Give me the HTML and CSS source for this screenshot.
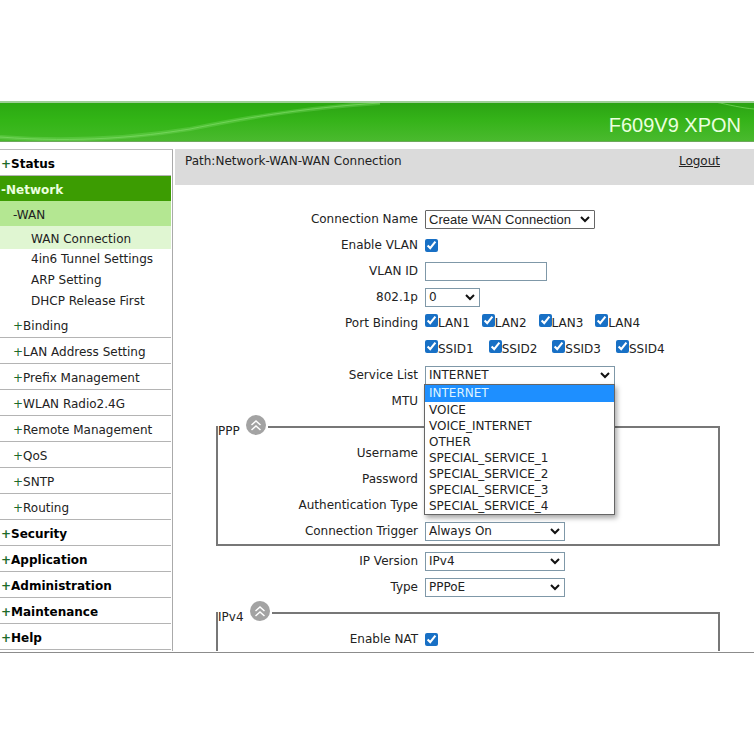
FILE: index.html
```
<!DOCTYPE html>
<html lang="en">
<head>
  <meta charset="UTF-8" />
  <meta name="viewport" content="width=device-width, initial-scale=1.0"/>
  <title>F609V9 XPON</title>
  <link rel="stylesheet" href="styles.css">
</head>
<body>
  <header class="banner">
    <svg class="swoosh" viewBox="0 0 754 38" preserveAspectRatio="none" aria-hidden="true">
      <path class="swoosh-shade" d="M0 0 L380 0 C300 5 240 16 190 26 C140 34 80 40 0 34 Z"/>
      <path class="swoosh-glow" d="M0 34 C80 40 140 34 190 26 C240 16 300 5 380 0"/>
      <path class="swoosh-line" d="M0 34 C80 40 140 34 190 26 C240 16 300 5 380 0"/>
      <path class="swoosh-line" d="M715 -1 C730 2 742 5 754 6"/>
    </svg>
    <h1>F609V9 XPON</h1>
  </header>

  <div class="frame">
    <nav class="sidebar">
      <ul class="menu">
        <li><a href="#"><span class="sign">+</span>Status</a></li>
        <li>
          <a href="#" class="current">-Network</a>
          <ul class="submenu">
            <li>
              <a href="#" class="current">-WAN</a>
              <ul class="pages">
                <li><a href="#" class="current">WAN Connection</a></li>
                <li><a href="#">4in6 Tunnel Settings</a></li>
                <li><a href="#">ARP Setting</a></li>
                <li><a href="#">DHCP Release First</a></li>
              </ul>
            </li>
            <li><a href="#"><span class="sign">+</span>Binding</a></li>
            <li><a href="#"><span class="sign">+</span>LAN Address Setting</a></li>
            <li><a href="#"><span class="sign">+</span>Prefix Management</a></li>
            <li><a href="#"><span class="sign">+</span>WLAN Radio2.4G</a></li>
            <li><a href="#"><span class="sign">+</span>Remote Management</a></li>
            <li><a href="#"><span class="sign">+</span>QoS</a></li>
            <li><a href="#"><span class="sign">+</span>SNTP</a></li>
            <li><a href="#"><span class="sign">+</span>Routing</a></li>
          </ul>
        </li>
        <li><a href="#"><span class="sign">+</span>Security</a></li>
        <li><a href="#"><span class="sign">+</span>Application</a></li>
        <li><a href="#"><span class="sign">+</span>Administration</a></li>
        <li><a href="#"><span class="sign">+</span>Maintenance</a></li>
        <li><a href="#"><span class="sign">+</span>Help</a></li>
      </ul>
    </nav>

    <main>
      <div class="path-bar">
        <span>Path:Network-WAN-WAN Connection</span>
        <a href="#">Logout</a>
      </div>

      <form class="wan-form">
        <div class="row">
          <label for="connName">Connection Name</label>
          <select id="connName" class="conn-name"><option>Create WAN Connection</option></select>
        </div>
        <div class="row">
          <label for="enableVlan">Enable VLAN</label>
          <input type="checkbox" id="enableVlan" checked>
        </div>
        <div class="row">
          <label for="vlanId">VLAN ID</label>
          <input type="text" id="vlanId">
        </div>
        <div class="row">
          <label for="priority">802.1p</label>
          <select id="priority" class="short"><option>0</option></select>
        </div>
        <div class="row">
          <span class="label">Port Binding</span>
          <div class="ports">
            <label><input type="checkbox" checked>LAN1</label>
            <label><input type="checkbox" checked>LAN2</label>
            <label><input type="checkbox" checked>LAN3</label>
            <label><input type="checkbox" checked>LAN4</label>
          </div>
        </div>
        <div class="row">
          <span class="label"></span>
          <div class="ports wifi">
            <label><input type="checkbox" checked>SSID1</label>
            <label><input type="checkbox" checked>SSID2</label>
            <label><input type="checkbox" checked>SSID3</label>
            <label><input type="checkbox" checked>SSID4</label>
          </div>
        </div>
        <div class="row">
          <label for="serviceList">Service List</label>
          <div class="dropdown">
            <select id="serviceList" class="long"><option>INTERNET</option></select>
            <ul class="options" role="listbox" aria-label="Service List">
              <li role="option" aria-selected="true">INTERNET</li>
              <li role="option">VOICE</li>
              <li role="option">VOICE_INTERNET</li>
              <li role="option">OTHER</li>
              <li role="option">SPECIAL_SERVICE_1</li>
              <li role="option">SPECIAL_SERVICE_2</li>
              <li role="option">SPECIAL_SERVICE_3</li>
              <li role="option">SPECIAL_SERVICE_4</li>
            </ul>
          </div>
        </div>
        <div class="row">
          <label for="mtu">MTU</label>
          <input type="text" id="mtu">
        </div>

        <fieldset>
          <legend>
            PPP
            <button type="button" class="fold" aria-label="Collapse PPP">
              <svg viewBox="0 0 20 20"><circle cx="10" cy="10" r="10"/><path d="M5.500 10 L10 6 L14.500 10 M5.500 15 L10 11 L14.500 15"/></svg>
            </button>
          </legend>
          <div class="row">
            <label for="username">Username</label>
            <input type="text" id="username">
          </div>
          <div class="row">
            <label for="password">Password</label>
            <input type="password" id="password">
          </div>
          <div class="row">
            <label for="authType">Authentication Type</label>
            <select id="authType"><option>Auto</option></select>
          </div>
          <div class="row">
            <label for="trigger">Connection Trigger</label>
            <select id="trigger"><option>Always On</option></select>
          </div>
        </fieldset>

        <div class="row">
          <label for="ipVersion">IP Version</label>
          <select id="ipVersion"><option>IPv4</option></select>
        </div>
        <div class="row">
          <label for="type">Type</label>
          <select id="type"><option>PPPoE</option></select>
        </div>

        <fieldset class="cut">
          <legend>
            IPv4
            <button type="button" class="fold" aria-label="Collapse IPv4">
              <svg viewBox="0 0 20 20"><circle cx="10" cy="10" r="10"/><path d="M5.500 10 L10 6 L14.500 10 M5.500 15 L10 11 L14.500 15"/></svg>
            </button>
          </legend>
          <div class="row">
            <label for="enableNat">Enable NAT</label>
            <input type="checkbox" id="enableNat" checked>
          </div>
        </fieldset>
      </form>
    </main>
  </div>
</body>
</html>
```
FILE: styles.css
```
* { box-sizing: border-box; }

body {
  margin: 0;
  padding-top: 101px;
  background: #fff;
  color: #222;
  font-family: Verdana, "DejaVu Sans", sans-serif;
  font-size: 12px;
}

ul {
  margin: 0;
  padding: 0;
  list-style: none;
}

a { color: inherit; }

/* Banner */
.banner {
  position: relative;
  display: flex;
  align-items: center;
  justify-content: flex-end;
  height: 41px;
  padding: 6px 13px 0;
  border-top: 2px solid #9fcf97;
  border-bottom: 1px solid #6da85c;
  background: linear-gradient(#2ba313, #35b319 45%, #4aba2e);
}

.banner h1 {
  position: relative;
  margin: 0;
  color: #eaffdf;
  font: 20px/24px Arial, "Liberation Sans", sans-serif;
}

.swoosh {
  position: absolute;
  top: 0;
  left: 0;
  width: 100%;
  height: 100%;
}

.swoosh-shade {
  fill: #2fb80f;
  fill-opacity: 0.3;
}

.swoosh-line,
.swoosh-glow {
  fill: none;
  stroke: #7fdc66;
  stroke-width: 1;
  stroke-opacity: 0.7;
}

.swoosh-glow {
  stroke-width: 4;
  stroke-opacity: 0.35;
}

.frame {
  display: flex;
  align-items: stretch;
  gap: 2px;
  margin-top: 7px;
  padding-bottom: 1px;
  border-bottom: 1px solid #8c8c8c;
}

/* Sidebar */
.sidebar {
  flex: 0 0 173px;
  padding-right: 1px;
  border-top: 1px solid #bbb;
  border-right: 1px solid #aaa;
}

.sidebar a {
  display: block;
  height: 26px;
  line-height: 28px;
  border-bottom: 1px solid #b4b4b4;
  text-decoration: none;
  white-space: nowrap;
}

.menu > li > a {
  padding-left: 1px;
  color: #000;
  font-weight: bold;
}

.menu > li > a.current {
  height: 25px;
  border: 0;
  background: #3c9c02;
  color: #eaffdf;
}

.submenu > li > a { padding-left: 13px; }

.submenu > li > a.current {
  height: 25px;
  border: 0;
  background: #b4e792;
}

.sidebar .pages a {
  height: 21px;
  padding-left: 31px;
  border: 0;
  line-height: 21px;
}

.sidebar .pages a.current {
  height: 23px;
  background: #e0f6d2;
  line-height: 26px;
}

.sign { color: #1d6b2a; }

/* Main area */
main {
  flex: 1;
  min-width: 0;
}

.path-bar {
  display: flex;
  justify-content: space-between;
  height: 36px;
  padding: 0 34px 0 10px;
  background: #dbdbdb;
  line-height: 25px;
}

.wan-form { padding: 21px 34px 0 41px; }

.row {
  display: grid;
  grid-template-columns: 202px 1fr;
  align-items: center;
  justify-items: start;
  column-gap: 7px;
  height: 26px;
}

.row > label,
.row > .label {
  justify-self: end;
}

input,
select {
  margin: 0;
  border: 1px solid #7f98a8;
  border-radius: 0;
  background: #fff;
  color: #222;
  font: inherit;
}

input[type="text"],
input[type="password"] {
  width: 122px;
  height: 19px;
}

input[type="checkbox"] {
  width: 13px;
  height: 13px;
  accent-color: #1870c5;
}

select {
  appearance: none;
  width: 140px;
  height: 19px;
  padding: 0 0 0 3px;
  background: #fff url("data:image/svg+xml,%3Csvg xmlns='http://www.w3.org/2000/svg' width='10' height='7'%3E%3Cpath d='M1 1 L5 5 L9 1' fill='none' stroke='%23111' stroke-width='2'/%3E%3C/svg%3E") no-repeat right 4px center;
}

select.conn-name {
  width: 170px;
  border-color: #666;
  border-radius: 1px;
  font: 13px Arial, "Liberation Sans", sans-serif;
}

select.short { width: 55px; }
select.long { width: 190px; }

.ports {
  display: flex;
  gap: 12px;
}

.ports.wifi { gap: 15px; }

.ports label {
  display: flex;
  align-items: flex-start;
  line-height: 18px;
}

/* Open list */
.dropdown {
  position: relative;
  display: flex;
}

.options {
  position: absolute;
  top: 18px;
  left: -1px;
  z-index: 10;
  width: 191px;
  border: 1px solid #666;
  background: #fff;
  box-shadow: 2px 3px 5px rgba(0,0,0,0.35);
}

.options li {
  height: 16px;
  padding-left: 4px;
  line-height: 16px;
}

.options li[aria-selected="true"] {
  height: 17px;
  background: #1e8fff;
  color: #dff4ff;
}

/* Groups */
fieldset {
  min-width: 0;
  margin: 0 0 2px;
  padding: 0;
  border: 2px solid #777;
}

fieldset .row { grid-template-columns: 200px 1fr; }

legend {
  display: flex;
  align-items: flex-end;
  gap: 6px;
  height: 26px;
  padding: 1px 2px 0 0;
  line-height: 18px;
}

.fold {
  align-self: flex-start;
  width: 20px;
  height: 20px;
  padding: 0;
  border: 0;
  background: none;
}

.fold svg {
  display: block;
  fill: #a3a3a3;
}

.fold path {
  fill: none;
  stroke: #fff;
  stroke-width: 1.5;
}

/* last group runs on below the frame */
fieldset.cut {
  margin: 0;
  padding-top: 1px;
  border-bottom: 0;
}

fieldset.cut .row { height: 24px; }
```
